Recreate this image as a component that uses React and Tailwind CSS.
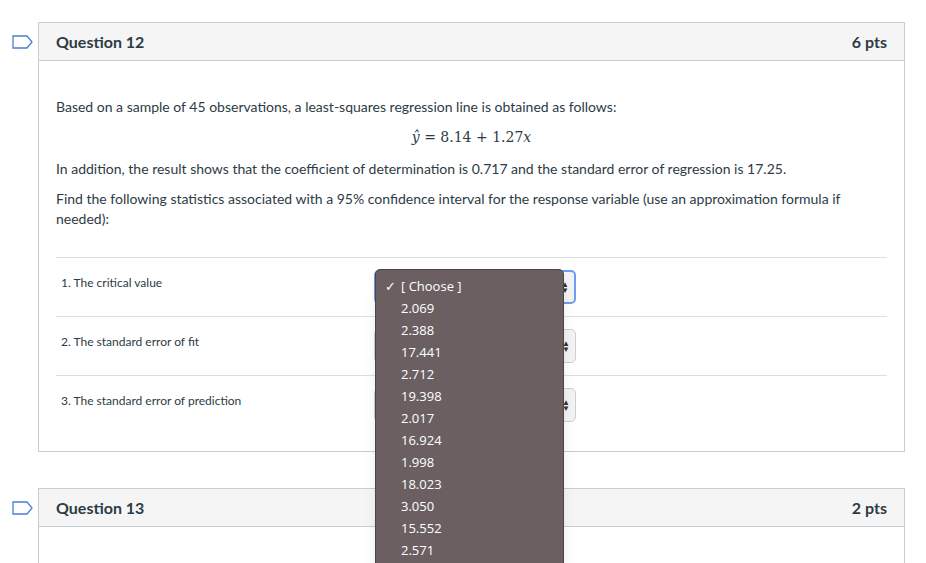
export default function App() {
  const opts = ["2.069","2.388","17.441","2.712","19.398","2.017","16.924","1.998","18.023","3.050","15.552","2.571"];
  const Flag = ({ top }) => (
    <svg width="22" height="14" viewBox="0 0 22 14" className={`absolute left-[12px] ${top}`}>
      <path d="M1 1 H15 L20 7 L15 13 H1 Z" fill="none" stroke="#4a7fd4" strokeWidth="1.3" />
    </svg>
  );
  const Sel = ({ focus }) => (
    <div className={`w-[202px] h-[34px] rounded-[5px] bg-[#f3f3f3] border flex items-center justify-end pr-[5px] ${focus ? "border-[#6d9df3] border-2" : "border-[#cfcfcf]"}`}>
      <span className="text-[8px] leading-[6px] text-[#333] flex flex-col items-center"><span>▲</span><span>▼</span></span>
    </div>
  );
  const rows = ["1. The critical value", "2. The standard error of fit", "3. The standard error of prediction"];
  return (
    <div className="w-[926px] h-[563px] overflow-hidden bg-white relative" style={{ fontFamily: "Lato, 'Open Sans', sans-serif" }}>
      <div className="relative pt-[22px]">
        <Flag top="top-[35px]" />
        <div className="ml-[38px] w-[867px] border border-[#c7cdd1]">
          <div className="h-[38px] bg-[#f5f5f5] border-b border-[#c7cdd1] flex items-center justify-between px-[17px]">
            <span className="text-[16px] font-bold text-[#2d3b45]">Question 12</span>
            <span className="text-[16px] font-bold text-[#2d3b45]">6 pts</span>
          </div>
          <div className="px-[17px] pt-[35px] pb-[17px] text-[14px] text-[#2d3b45]">
            <p>Based on a sample of 45 observations, a least-squares regression line is obtained as follows:</p>
            <p className="text-center mt-[10px]" style={{ fontFamily: "'DejaVu Serif', 'Liberation Serif', serif" }}><i>ŷ</i> = 8.14 + 1.27<i>x</i></p>
            <p className="mt-[10px]">In addition, the result shows that the coefficient of determination is 0.717 and the standard error of regression is 17.25.</p>
            <p className="mt-[10px] leading-[20px]">Find the following statistics associated with a 95% confidence interval for the response variable (use an approximation formula if needed):</p>
            <div className="mt-[28px]">
              {rows.map((r, i) => (
                <div key={i} className="h-[59px] border-t border-[#dcdfe1] flex items-center">
                  <span className="w-[318px] pl-[5px] text-[12px] mb-[8px]">{r}</span>
                  <Sel focus={i === 0} />
                </div>
              ))}
            </div>
          </div>
        </div>
      </div>
      <div className="relative mt-[36px]">
        <Flag top="top-[13px]" />
        <div className="ml-[38px] w-[867px] border border-[#c7cdd1] h-[80px]">
          <div className="h-[38px] bg-[#f5f5f5] border-b border-[#c7cdd1] flex items-center justify-between px-[17px]">
            <span className="text-[16px] font-bold text-[#2d3b45]">Question 13</span>
            <span className="text-[16px] font-bold text-[#2d3b45]">2 pts</span>
          </div>
        </div>
      </div>
      <div className="absolute left-[375px] top-[269px] w-[189px] h-[310px] rounded-[5px] bg-[#6b5f62] border border-[#4d4446] shadow-lg pt-[6px] text-white text-[13px]" style={{ fontFamily: "'Open Sans', sans-serif" }}>
        <div className="h-[22px] flex items-center pl-[9px]"><span className="w-[16px]">✓</span>[ Choose ]</div>
        {opts.map(o => <div key={o} className="h-[22px] flex items-center pl-[25px]">{o}</div>)}
      </div>
    </div>
  );
}
